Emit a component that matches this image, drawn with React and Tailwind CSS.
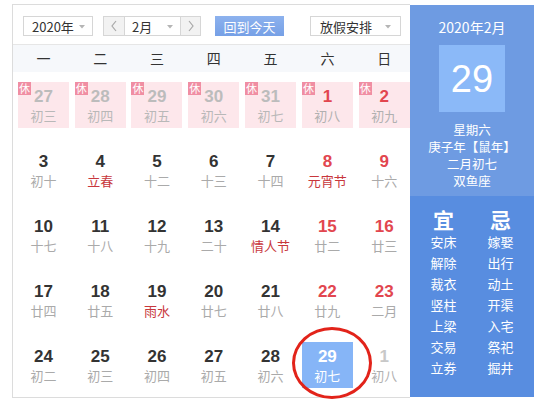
const weekdays = ['一', '二', '三', '四', '五', '六', '日'];

// type: prev = previous month (rest), rest = holiday in month, wk = weekend, fest = festival lunar, next = next month
const days = [
  { d: 27, l: '初三', t: 'prev' },
  { d: 28, l: '初四', t: 'prev' },
  { d: 29, l: '初五', t: 'prev' },
  { d: 30, l: '初六', t: 'prev' },
  { d: 31, l: '初七', t: 'prev' },
  { d: 1, l: '初八', t: 'rest' },
  { d: 2, l: '初九', t: 'rest' },
  { d: 3, l: '初十' },
  { d: 4, l: '立春', f: true },
  { d: 5, l: '十二' },
  { d: 6, l: '十三' },
  { d: 7, l: '十四' },
  { d: 8, l: '元宵节', f: true, w: true },
  { d: 9, l: '十六', w: true },
  { d: 10, l: '十七' },
  { d: 11, l: '十八' },
  { d: 12, l: '十九' },
  { d: 13, l: '二十' },
  { d: 14, l: '情人节', f: true },
  { d: 15, l: '廿二', w: true },
  { d: 16, l: '廿三', w: true },
  { d: 17, l: '廿四' },
  { d: 18, l: '廿五' },
  { d: 19, l: '雨水', f: true },
  { d: 20, l: '廿七' },
  { d: 21, l: '廿八' },
  { d: 22, l: '廿九', w: true },
  { d: 23, l: '二月', w: true },
  { d: 24, l: '初二' },
  { d: 25, l: '初三' },
  { d: 26, l: '初四' },
  { d: 27, l: '初五' },
  { d: 28, l: '初六' },
  { d: 29, l: '初七', t: 'today' },
  { d: 1, l: '初八', t: 'next' },
];

const yi = ['安床', '解除', '裁衣', '竖柱', '上梁', '交易', '立券'];
const ji = ['嫁娶', '出行', '动土', '开渠', '入宅', '祭祀', '掘井'];

function Caret() {
  return (
    <svg width="8" height="5" viewBox="0 0 8 5" className="shrink-0">
      <path d="M1 1 L7 1 L4 4.5 Z" fill="#b5b5b5" />
    </svg>
  );
}

function Chevron({ dir }) {
  return (
    <svg width="8" height="12" viewBox="0 0 8 12">
      <polyline
        points={dir === 'left' ? '6,1 2,6 6,11' : '2,1 6,6 2,11'}
        fill="none"
        stroke="#a8a8a8"
        strokeWidth="1.2"
      />
    </svg>
  );
}

function Cell({ day }) {
  const { d, l, t, f, w } = day;
  let box = 'relative mx-auto mt-[10px] flex h-[46px] w-[51px] flex-col items-center pt-[5px]';
  let num = 'text-[#333]';
  let lunar = 'text-[#aaaaaa]';
  if (t === 'prev') {
    box += ' bg-[#fde7eb]';
    num = 'text-[#bcbcbc]';
    lunar = 'text-[#b8b8b8]';
  } else if (t === 'rest') {
    box += ' bg-[#fde7eb]';
    num = 'text-[#e2464f]';
    lunar = 'text-[#b0b0b0]';
  } else if (t === 'today') {
    box += ' bg-[#86b5f7]';
    num = 'text-white';
    lunar = 'text-white';
  } else if (t === 'next') {
    num = 'text-[#c8c8c8]';
    lunar = 'text-[#b0b0b0]';
  } else if (w) {
    num = 'text-[#e2464f]';
  }
  if (f) lunar = 'text-[#c8373c]';

  return (
    <div className="relative h-[65px]">
      <div className={box}>
        {(t === 'prev' || t === 'rest') && (
          <span className="absolute left-0 top-0 flex h-[13px] w-[13px] items-center justify-center bg-[#f08ea3] text-[11px] leading-none text-white">
            休
          </span>
        )}
        <span className={`font-['Liberation_Sans',sans-serif] text-[17px] font-bold leading-[20px] ${num}`}>{d}</span>
        <span className={`text-[13px] leading-[18px] ${lunar}`}>{l}</span>
      </div>
      {t === 'today' && (
        <div className="pointer-events-none absolute left-[-7px] top-[-5px] h-[72px] w-[80px] rounded-[50%] border-[3px] border-[#e2231a]" />
      )}
    </div>
  );
}

export default function App() {
  return (
    <div className="flex h-[401px] w-[544px] bg-white pl-[12px] pt-[4px] font-['Noto_Sans_CJK_SC',sans-serif]">
      <div className="h-[394px] w-[398px] border border-r-0 border-[#dcdcdc]">
        <div className="flex h-[40px] items-start border-b border-[#e6e6e6] pl-[10px] pt-[11px] text-[13px] text-[#333]">
          <div className="flex h-[20px] w-[70px] items-center justify-between border border-[#d6d6d6] pl-[8px] pr-[6px]">
            <span className="leading-none">2020年</span>
            <Caret />
          </div>
          <div className="ml-[10px] flex h-[20px] items-stretch border border-[#d6d6d6]">
            <div className="flex w-[21px] items-center justify-center border-r border-[#d6d6d6] bg-[#f2f2f2]">
              <Chevron dir="left" />
            </div>
            <div className="flex w-[55px] items-center justify-between bg-white pl-[7px] pr-[6px]">
              <span className="leading-none">2月</span>
              <Caret />
            </div>
            <div className="flex w-[20px] items-center justify-center border-l border-[#d6d6d6] bg-[#f2f2f2]">
              <Chevron dir="right" />
            </div>
          </div>
          <div className="ml-[14px] flex h-[20px] w-[69px] items-center justify-center bg-gradient-to-b from-[#8db2ee] to-[#76a0e6] leading-none text-white">
            回到今天
          </div>
          <div className="ml-[26px] flex h-[20px] w-[91px] items-center justify-between border border-[#d6d6d6] pl-[9px] pr-[8px]">
            <span className="leading-none">放假安排</span>
            <Caret />
          </div>
        </div>
        <div className="grid h-[27px] grid-cols-[repeat(7,56.8px)] bg-[#f6f8fb] pl-[2px] text-[14px] text-[#333]">
          {weekdays.map((w) => (
            <div key={w} className="flex items-center justify-center">
              {w}
            </div>
          ))}
        </div>
        <div className="grid grid-cols-[repeat(7,56.8px)] pl-[2px]">
          {days.map((day, i) => (
            <Cell key={i} day={day} />
          ))}
        </div>
      </div>
      <div className="relative z-10 mt-[1px] flex h-[392px] w-[124px] flex-col text-white">
        <div className="flex h-[191px] flex-col items-center bg-[#6e9be2] pt-[12px]">
          <div className="text-[14px] leading-[20px]">2020年2月</div>
          <div className="mt-[8px] flex h-[67px] w-[66px] items-center justify-center bg-[#8bb9f8] font-['Liberation_Sans',sans-serif] text-[38px] leading-none">
            29
          </div>
          <div className="mt-[9px] flex flex-col items-center text-[12.5px] leading-[17px]">
            <span>星期六</span>
            <span>庚子年【鼠年】</span>
            <span>二月初七</span>
            <span>双鱼座</span>
          </div>
        </div>
        <div className="flex flex-1 justify-center bg-[#588de0] pt-[11px]">
          <div className="flex w-[57px] flex-col items-center">
            <span className="text-[21px] font-bold leading-[24px]">宜</span>
            {yi.map((x) => (
              <span key={x} className="text-[13px] leading-[21px]">
                {x}
              </span>
            ))}
          </div>
          <div className="flex w-[57px] flex-col items-center">
            <span className="text-[21px] font-bold leading-[24px]">忌</span>
            {ji.map((x) => (
              <span key={x} className="text-[13px] leading-[21px]">
                {x}
              </span>
            ))}
          </div>
        </div>
      </div>
    </div>
  );
}
